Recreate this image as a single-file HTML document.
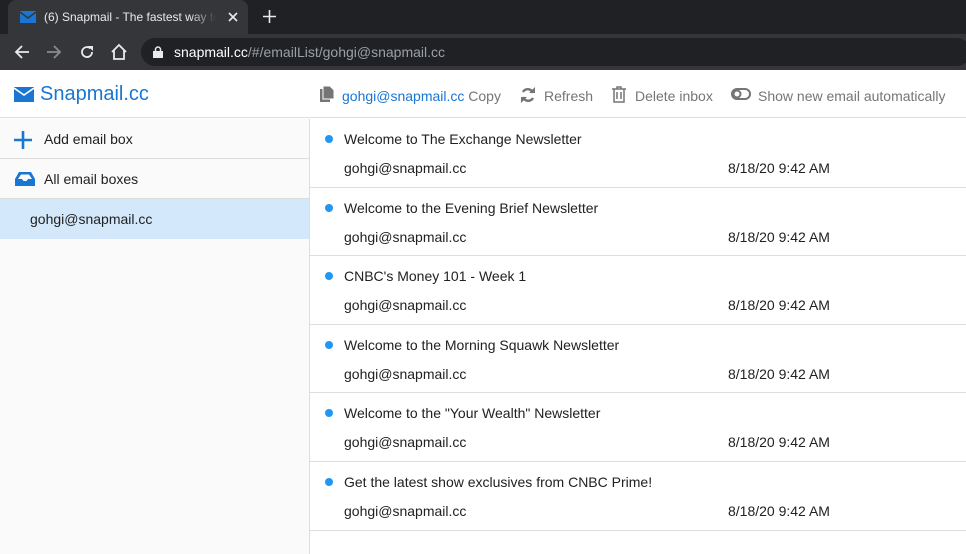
<!DOCTYPE html>
<html><head><meta charset="utf-8"><style>
*{margin:0;padding:0;box-sizing:border-box}
body{width:966px;height:554px;overflow:hidden;font-family:"Liberation Sans",Arial,sans-serif;background:#fff;position:relative}
.tabbar{position:absolute;left:0;top:0;width:966px;height:34px;background:#202124}
.tab{position:absolute;left:8px;top:0;width:240px;height:34px;background:#35363a;border-radius:8px 8px 0 0}
.tab .t{position:absolute;left:36px;top:10px;color:#e8eaed;font-size:12px;white-space:nowrap;width:172px;overflow:hidden;-webkit-mask-image:linear-gradient(to right,#000 85%,transparent)}
.toolbar{position:absolute;left:0;top:34px;width:966px;height:36px;background:#35363a}
.url{position:absolute;left:141px;top:4px;width:830px;height:28px;border-radius:14px;background:#202124;color:#9aa0a6;font-size:14px;line-height:28px;padding-left:33px}
.url b{font-weight:normal;color:#fff}
.hdr{position:absolute;left:0;top:70px;width:966px;height:48px;border-bottom:1px solid #ddd;background:#fff}
.logo{position:absolute;left:40px;top:13px;font-size:20px;color:#1976d2}
.act{position:absolute;top:18px;font-size:14px;color:#757575;white-space:nowrap}
.side{position:absolute;left:0;top:119px;width:310px;height:435px;background:#fafafa;border-right:1px solid #ddd}
.si{height:40px;border-bottom:1px solid #ddd;font-size:14px;color:#212121;line-height:40px;padding-left:44px;position:relative}
.sel{background:#d3e9fb;padding-left:30px;border:none}
.list{position:absolute;left:310px;top:119px;width:656px}
.row{height:68.6px;border-bottom:1px solid #ddd;position:relative;font-size:14px;color:#212121}
.row .d{position:absolute;left:15px;top:16px;width:8px;height:8px;border-radius:50%;background:#2196f3}
.row .s{position:absolute;left:34px;top:12px}
.row .f{position:absolute;left:34px;top:41px}
.row .dt{position:absolute;left:418px;top:41px}
</style></head><body>
<div class="tabbar"><div class="tab">
<svg style="position:absolute;left:12px;top:11px" width="16" height="12"><rect width="16" height="12" fill="#1976d2"/><path d="M0 1 L8 7 L16 1" stroke="#35363a" stroke-width="1.5" fill="none"/></svg>
<div class="t">(6) Snapmail - The fastest way to</div>
<svg style="position:absolute;left:220px;top:12px" width="10" height="10"><path d="M1 1L9 9M9 1L1 9" stroke="#e8eaed" stroke-width="1.6"/></svg>
</div>
<svg style="position:absolute;left:263px;top:10px" width="13" height="13"><path d="M6.5 0V13M0 6.5H13" stroke="#e8eaed" stroke-width="1.6"/></svg>
</div>
<div class="toolbar">
<svg style="position:absolute;left:14px;top:10px" width="16" height="16"><path d="M15 8H2M8 2L2 8L8 14" stroke="#e8eaed" stroke-width="1.8" fill="none"/></svg>
<svg style="position:absolute;left:46px;top:10px" width="16" height="16"><path d="M1 8H14M8 2L14 8L8 14" stroke="#8a8b8d" stroke-width="1.8" fill="none"/></svg>
<svg style="position:absolute;left:79px;top:10px" width="16" height="16"><path d="M13 8A5 5 0 1 1 11.5 4.5" stroke="#e8eaed" stroke-width="1.8" fill="none"/><path d="M9 2H14V7Z" fill="#e8eaed"/></svg>
<svg style="position:absolute;left:110px;top:9px" width="18" height="18"><path d="M2 9L9 2L16 9M4 7V16H14V7" stroke="#e8eaed" stroke-width="1.8" fill="none"/></svg>
<div class="url"><svg style="position:absolute;left:12px;top:8px" width="10" height="12"><rect x="0" y="5" width="10" height="7" fill="#e8eaed"/><path d="M2.5 5V3.5A2.5 2.5 0 0 1 7.5 3.5V5" stroke="#e8eaed" stroke-width="1.5" fill="none"/></svg><b>snapmail.cc</b>/#/emailList/gohgi@snapmail.cc</div>
</div>
<div class="hdr">
<svg style="position:absolute;left:14px;top:17px" width="20" height="15"><rect width="20" height="15" fill="#1976d2"/><path d="M0 1L10 8L20 1" stroke="#fff" stroke-width="1.6" fill="none"/></svg>
<div class="logo">Snapmail.cc</div>
<svg style="position:absolute;left:320px;top:16px" width="14" height="16"><rect x="0" y="3" width="10" height="13" fill="#757575"/><path d="M3 0H10L14 4V13H3Z" fill="#757575" stroke="#fff" stroke-width="1"/></svg>
<div class="act" style="left:342px"><span style="color:#1976d2">gohgi@snapmail.cc</span> Copy</div>
<svg style="position:absolute;left:520px;top:17px" width="16" height="16"><path d="M13 6A5.5 5.5 0 0 0 3 5M3 10A5.5 5.5 0 0 0 13 11" stroke="#757575" stroke-width="2.4" fill="none"/><path d="M9 6H15V0Z M7 10H1V16Z" fill="#757575"/></svg>
<div class="act" style="left:544px">Refresh</div>
<svg style="position:absolute;left:612px;top:16px" width="14" height="17"><path d="M0 3H14M5 3V1H9V3M2 3V16H12V3M5 6V13M9 6V13" stroke="#757575" stroke-width="1.5" fill="none"/></svg>
<div class="act" style="left:635px">Delete inbox</div>
<svg style="position:absolute;left:731px;top:18px" width="20" height="12"><rect x="1" y="1" width="18" height="10" rx="5" stroke="#757575" stroke-width="2" fill="none"/><circle cx="6" cy="6" r="3.5" fill="none" stroke="#757575" stroke-width="2"/></svg>
<div class="act" style="left:758px">Show new email automatically</div>
</div>
<div class="side">
<div class="si"><svg style="position:absolute;left:14px;top:12px" width="18" height="18"><path d="M9 0V18M0 9H18" stroke="#1976d2" stroke-width="2.6"/></svg>Add email box</div>
<div class="si"><svg style="position:absolute;left:14px;top:12px" width="22" height="16"><path d="M1 8L5 1H17L21 8V15H1Z" fill="#1976d2"/><path d="M4 8L7 3.5H15L18 8H14L12.5 10H9.5L8 8Z" fill="#fafafa"/></svg>All email boxes</div>
<div class="si sel">gohgi@snapmail.cc</div>
</div>
<div class="list">
<div class="row"><div class="d"></div><div class="s">Welcome to The Exchange Newsletter</div><div class="f">gohgi@snapmail.cc</div><div class="dt">8/18/20 9:42 AM</div></div>
<div class="row"><div class="d"></div><div class="s">Welcome to the Evening Brief Newsletter</div><div class="f">gohgi@snapmail.cc</div><div class="dt">8/18/20 9:42 AM</div></div>
<div class="row"><div class="d"></div><div class="s">CNBC's Money 101 - Week 1</div><div class="f">gohgi@snapmail.cc</div><div class="dt">8/18/20 9:42 AM</div></div>
<div class="row"><div class="d"></div><div class="s">Welcome to the Morning Squawk Newsletter</div><div class="f">gohgi@snapmail.cc</div><div class="dt">8/18/20 9:42 AM</div></div>
<div class="row"><div class="d"></div><div class="s">Welcome to the "Your Wealth" Newsletter</div><div class="f">gohgi@snapmail.cc</div><div class="dt">8/18/20 9:42 AM</div></div>
<div class="row"><div class="d"></div><div class="s">Get the latest show exclusives from CNBC Prime!</div><div class="f">gohgi@snapmail.cc</div><div class="dt">8/18/20 9:42 AM</div></div>
</div>
</body></html>
